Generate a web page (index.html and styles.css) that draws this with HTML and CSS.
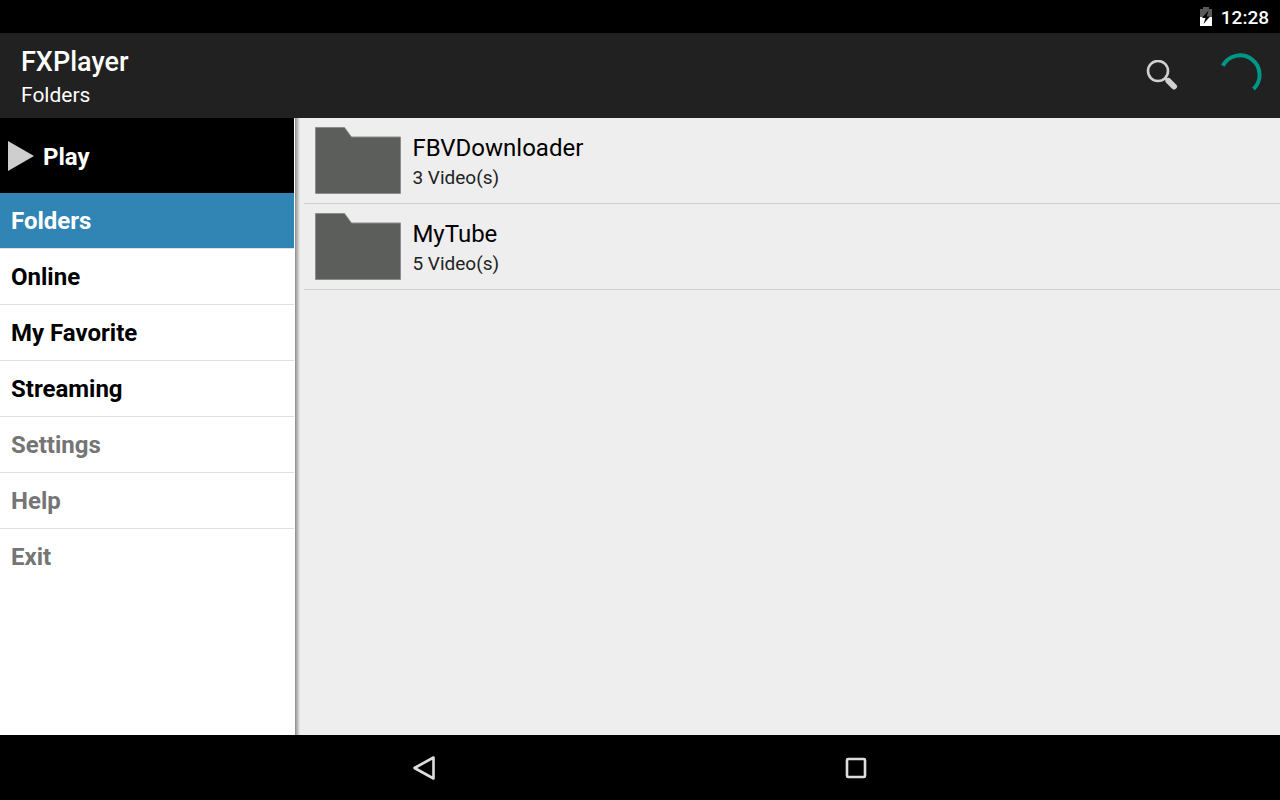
FILE: index.html
```html
<!DOCTYPE html>
<html lang="en">
<head>
<meta charset="utf-8">
<meta name="viewport" content="width=device-width, initial-scale=1">
<title>FXPlayer</title>
<link rel="stylesheet" href="styles.css">
</head>
<body>
<div class="status-bar">
  <svg class="battery" viewBox="0 0 12 19" width="12" height="19" aria-hidden="true">
    <path fill="#5a5a5a" d="M0 2h3V0h6v2h3v8H0z"/>
    <path fill="#fff" d="M0 10h12v9H0z"/>
    <path fill="#000" d="M8.500 3.500 2 11h3.500l-2 6L10 9.500H6.700z"/>
  </svg>
  <time class="clock">12:28</time>
</div>
<header class="app-bar">
  <div class="titles">
    <h1 class="title">FXPlayer</h1>
    <p class="subtitle">Folders</p>
  </div>
  <button class="icon-button" type="button" aria-label="Search">
    <svg viewBox="0 0 32 32" width="32" height="32">
      <circle cx="12" cy="11" r="10" fill="none" stroke="#d0d0d0" stroke-width="2.6"/>
      <path d="M18.5 17.5 22 21" stroke="#d0d0d0" stroke-width="3"/>
      <path d="M22.500 21 28 26.500" stroke="#d0d0d0" stroke-width="6" stroke-linecap="round"/>
    </svg>
  </button>
  <div class="spinner" role="progressbar" aria-label="Loading">
    <svg viewBox="0 0 44 44" width="44" height="44">
      <path d="M4.8 12.8A19.5 19.5 0 1 1 35.5 36" fill="none" stroke="#009688" stroke-width="4"/>
    </svg>
  </div>
</header>
<div class="content">
  <nav class="sidebar" aria-label="Main">
    <button class="play" type="button">
      <svg viewBox="0 0 27 32" width="27" height="32" aria-hidden="true"><path fill="#cecece" d="M0 1 26 16 0 31z"/></svg>
      <span class="play-label">Play</span>
    </button>
    <ul class="menu">
      <li><a class="menu-item selected" href="#folders" aria-current="page">Folders</a></li>
      <li><a class="menu-item" href="#online">Online</a></li>
      <li><a class="menu-item" href="#favorite">My Favorite</a></li>
      <li><a class="menu-item" href="#streaming">Streaming</a></li>
      <li><a class="menu-item muted" href="#settings">Settings</a></li>
      <li><a class="menu-item muted" href="#help">Help</a></li>
      <li><a class="menu-item muted" href="#exit">Exit</a></li>
    </ul>
  </nav>
  <div class="divider"></div>
  <main class="folders">
    <a class="folder" href="#fbvdownloader">
      <svg viewBox="0 0 88 68" width="88" height="68" aria-hidden="true"><path fill="#5c5e5b" stroke="#8c8a8c" d="M1.500 .5h29l7 9.500h49v56.500h-85z"/></svg>
      <span class="folder-text"><span class="folder-name">FBVDownloader</span><span class="folder-count">3 Video(s)</span></span>
    </a>
    <a class="folder" href="#mytube">
      <svg viewBox="0 0 88 68" width="88" height="68" aria-hidden="true"><path fill="#5c5e5b" stroke="#8c8a8c" d="M1.500 .5h29l7 9.500h49v56.500h-85z"/></svg>
      <span class="folder-text"><span class="folder-name">MyTube</span><span class="folder-count">5 Video(s)</span></span>
    </a>
  </main>
</div>
<footer class="nav-bar">
  <button class="nav-button" type="button" aria-label="Back">
    <svg viewBox="0 0 24 26" width="24" height="26"><path d="M21.5 2.5v21L2.5 13z" fill="none" stroke="#dedede" stroke-width="2.6" stroke-linejoin="round"/></svg>
  </button>
  <button class="nav-button" type="button" aria-label="Recent apps">
    <svg viewBox="0 0 24 26" width="24" height="26"><rect x="3" y="4" width="18" height="18" rx="1" fill="none" stroke="#dedede" stroke-width="2.6"/></svg>
  </button>
</footer>
</body>
</html>
```
FILE: styles.css
```css
* {
  box-sizing: border-box;
}

body {
  margin: 0;
  min-height: 100vh;
  display: flex;
  flex-direction: column;
  background: #000;
  color: #000;
  font-family: Roboto, "Liberation Sans", sans-serif;
}

button {
  margin: 0;
  padding: 0;
  border: 0;
  background: none;
  color: inherit;
  font: inherit;
  cursor: pointer;
}

a {
  color: inherit;
  text-decoration: none;
}

svg {
  display: block;
  flex: none;
}

.status-bar {
  height: 33px;
  padding: 0 11px;
  display: flex;
  align-items: center;
  justify-content: flex-end;
  gap: 9px;
  color: #fff;
}

.clock {
  padding-top: 2px;
  font-size: 19px;
  font-weight: 500;
  line-height: 24px;
}

.app-bar {
  height: 85px;
  padding: 0 18px 0 21px;
  display: flex;
  align-items: center;
  background: #212121;
  color: #fff;
}

.titles {
  flex: 1;
  padding-top: 2px;
}

.title {
  margin: 0;
  font-size: 27px;
  font-weight: 500;
  line-height: 36px;
}

.subtitle {
  margin: 0;
  font-size: 21px;
  line-height: 30px;
}

.icon-button {
  margin-right: 40px;
}

.spinner {
  height: 44px;
  margin-bottom: 2px;
}

.content {
  flex: 1;
  display: flex;
}

.sidebar {
  width: 23%;
  background: #fff;
}

.play {
  width: 100%;
  height: 75px;
  padding: 0 8px;
  display: flex;
  align-items: center;
  gap: 8px;
  background: #000;
  color: #fff;
  font-size: 24px;
  font-weight: 700;
}

.play-label {
  padding-top: 2px;
}

.menu {
  margin: 0;
  padding: 0;
  list-style: none;
}

.menu-item {
  display: block;
  padding: 13px 11px 11px;
  border-bottom: 1px solid #e0e0e0;
  font-size: 24px;
  font-weight: 700;
  line-height: 31px;
}

.menu li:last-child .menu-item {
  border-bottom: 0;
}

.menu-item.selected {
  background: #3185b5;
  color: #fff;
}

.menu-item.muted {
  color: #757575;
}

.divider {
  width: 6px;
  background: linear-gradient(to right, #fff 1px, #8c8c8c 1px, #ededed);
}

.folders {
  flex: 1;
  padding-left: 4px;
  background: #eee;
}

.folder {
  height: 86px;
  padding: 0 10px;
  display: flex;
  align-items: center;
  gap: 10px;
  border-bottom: 1px solid #d0d0d0;
}

.folder-text {
  padding-top: 2px;
  display: flex;
  flex-direction: column;
}

.folder-name {
  font-size: 24px;
  line-height: 32px;
}

.folder-count {
  color: #222;
  font-size: 19px;
  line-height: 28px;
}

.nav-bar {
  height: 65px;
  display: flex;
  align-items: center;
  justify-content: center;
  gap: 408px;
  background: #000;
}

.nav-button {
  width: 24px;
}
```
